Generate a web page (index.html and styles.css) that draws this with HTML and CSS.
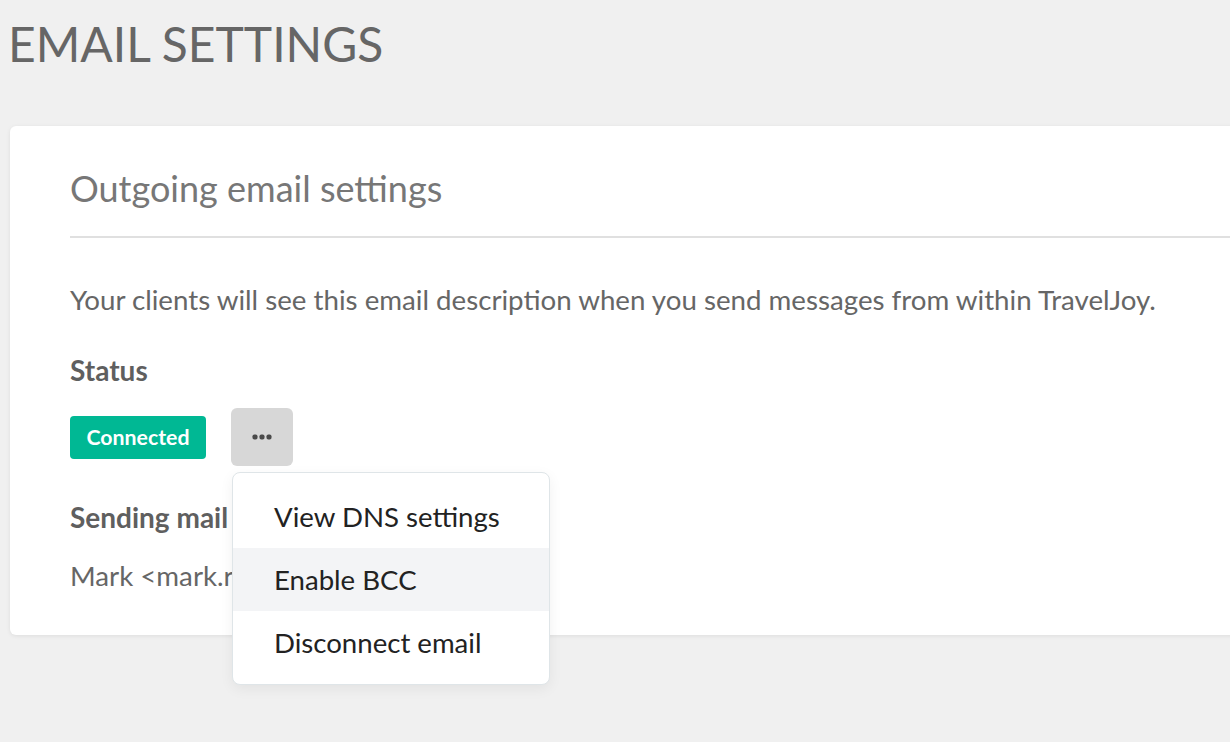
FILE: index.html
```html
<!DOCTYPE html>
<html lang="en">

<head>
    <meta charset="UTF-8">
    <meta name="viewport" content="width=device-width, initial-scale=1.0">
    <title>Email settings</title>
    <link rel="stylesheet" href="styles.css">
</head>

<body>
    <div class="page">
        <h1 class="page_title">EMAIL SETTINGS</h1>
        <div class="card">
            <h2 class="card_title">Outgoing email settings</h2>
            <p class="card_desc">Your clients will see this email description when you send messages from within TravelJoy.</p>
            <h3 class="field_label">Status</h3>
            <div class="status_row">
                <span class="badge">Connected</span>
                <div class="more">
                    <button class="more_btn" type="button">
                        <svg width="20" height="6" viewBox="0 0 20 6">
                            <rect x="0.5" y="0.5" width="5" height="5" rx="1.8" fill="#4a4a4a"/>
                            <rect x="7.5" y="0.5" width="5" height="5" rx="1.8" fill="#4a4a4a"/>
                            <rect x="14.5" y="0.5" width="5" height="5" rx="1.8" fill="#4a4a4a"/>
                        </svg>
                    </button>
                    <ul class="menu">
                        <li class="menu_item">View DNS settings</li>
                        <li class="menu_item menu_item_hover">Enable BCC</li>
                        <li class="menu_item">Disconnect email</li>
                    </ul>
                </div>
            </div>
            <h3 class="field_label field_label_second">Sending mail</h3>
            <p class="field_value">Mark &lt;mark.r@traveljoy.com&gt;</p>
        </div>
    </div>
</body>

</html>
```

FILE: styles.css
```css
* {
    margin: 0;
    padding: 0;
    box-sizing: border-box;
}

body {
    background-color: #f0f0f0;
    font-family: Lato, "Liberation Sans", sans-serif;
    color: #666;
}

.page {
    width: 100%;
    height: 742px;
    overflow: hidden;
    padding: 14px 0 0 10px;
}

.page_title {
    font-size: 48px;
    font-weight: 400;
    color: #666;
    line-height: 60px;
    margin-left: -2px;
}

.card {
    margin-top: 52px;
    margin-right: -40px;
    background-color: #fff;
    border-radius: 6px;
    box-shadow: 0 1px 4px rgba(0, 0, 0, 0.08);
    padding: 40px 0 43px 60px;
}

.card_title {
    font-size: 36px;
    font-weight: 400;
    color: #777;
    line-height: 44px;
    padding-bottom: 26px;
    border-bottom: 2px solid #e0e0e0;
}

.card_desc {
    font-size: 27.7px;
    line-height: 32px;
    margin-top: 46px;
    color: #666;
}

.field_label {
    font-size: 28px;
    font-weight: 700;
    color: #5f5f5f;
    line-height: 32px;
    margin-top: 38px;
}

.field_label_second {
    margin-top: 35px;
}

.status_row {
    display: flex;
    align-items: center;
    gap: 25px;
    margin-top: 22px;
}

.badge {
    display: inline-flex;
    align-items: center;
    justify-content: center;
    width: 136px;
    height: 43px;
    background-color: #00b894;
    color: #fff;
    font-size: 21.3px;
    font-weight: 700;
    border-radius: 4px;
}

.more {
    position: relative;
}

.more_btn {
    display: flex;
    align-items: center;
    justify-content: center;
    width: 62px;
    height: 58px;
    background-color: #d7d7d7;
    border: none;
    border-radius: 6px;
}

.menu {
    position: absolute;
    top: 64px;
    left: 1px;
    width: 318px;
    list-style: none;
    background-color: #fff;
    border: 1px solid #dfe5e8;
    border-radius: 8px;
    box-shadow: 0 4px 14px rgba(0, 0, 0, 0.06);
    padding: 12px 0 10px;
    z-index: 2;
}

.menu_item {
    font-size: 27.6px;
    color: #222;
    line-height: 63px;
    padding-left: 41px;
}

.menu_item_hover {
    background-color: #f3f4f6;
}

.field_value {
    font-size: 27.7px;
    line-height: 32px;
    margin-top: 27px;
    color: #666;
}
```
